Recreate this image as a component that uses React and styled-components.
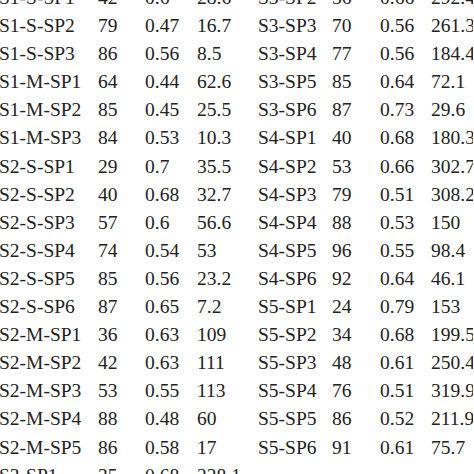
import styled, { createGlobalStyle } from 'styled-components';

const GlobalStyle = createGlobalStyle`
  html, body {
    margin: 0;
    padding: 0;
    background: #ffffff;
    overflow: hidden;
  }
`

const leftRows = [
  ['S1-S-SP1', '42', '0.6', '28.6'],
  ['S1-S-SP2', '79', '0.47', '16.7'],
  ['S1-S-SP3', '86', '0.56', '8.5'],
  ['S1-M-SP1', '64', '0.44', '62.6'],
  ['S1-M-SP2', '85', '0.45', '25.5'],
  ['S1-M-SP3', '84', '0.53', '10.3'],
  ['S2-S-SP1', '29', '0.7', '35.5'],
  ['S2-S-SP2', '40', '0.68', '32.7'],
  ['S2-S-SP3', '57', '0.6', '56.6'],
  ['S2-S-SP4', '74', '0.54', '53'],
  ['S2-S-SP5', '85', '0.56', '23.2'],
  ['S2-S-SP6', '87', '0.65', '7.2'],
  ['S2-M-SP1', '36', '0.63', '109'],
  ['S2-M-SP2', '42', '0.63', '111'],
  ['S2-M-SP3', '53', '0.55', '113'],
  ['S2-M-SP4', '88', '0.48', '60'],
  ['S2-M-SP5', '86', '0.58', '17'],
  ['S3-SP1', '35', '0.68', '228.1'],
]

const rightRows = [
  ['S3-SP2', '56', '0.66', '292.4'],
  ['S3-SP3', '70', '0.56', '261.3'],
  ['S3-SP4', '77', '0.56', '184.4'],
  ['S3-SP5', '85', '0.64', '72.1'],
  ['S3-SP6', '87', '0.73', '29.6'],
  ['S4-SP1', '40', '0.68', '180.3'],
  ['S4-SP2', '53', '0.66', '302.7'],
  ['S4-SP3', '79', '0.51', '308.2'],
  ['S4-SP4', '88', '0.53', '150'],
  ['S4-SP5', '96', '0.55', '98.4'],
  ['S4-SP6', '92', '0.64', '46.1'],
  ['S5-SP1', '24', '0.79', '153'],
  ['S5-SP2', '34', '0.68', '199.5'],
  ['S5-SP3', '48', '0.61', '250.4'],
  ['S5-SP4', '76', '0.51', '319.9'],
  ['S5-SP5', '86', '0.52', '211.9'],
  ['S5-SP6', '91', '0.61', '75.7'],
]

const App = () => {
  return (
    <>
      <GlobalStyle />
      <Page>
        <Block $cols='99px 47px 52px 61px'>
          {leftRows.map((row, i) => (
            <Row key={i}>
              {row.map((cell, j) => <Cell key={j}>{cell}</Cell>)}
            </Row>
          ))}
        </Block>
        <Block $cols='74px 48px 51px 60px'>
          {rightRows.map((row, i) => (
            <Row key={i}>
              {row.map((cell, j) => <Cell key={j}>{cell}</Cell>)}
            </Row>
          ))}
        </Block>
      </Page>
    </>
  )
}

export default App

const Page = styled.div`
  width: 474px;
  height: 474px;
  overflow: hidden;
  display: flex;
  align-items: flex-start;
  padding: 0 0 0 0;
  margin-left: -1px;
  font-family: "Liberation Serif", "Times New Roman", serif;
  font-size: 19.5px;
  color: #222222;
`

const Block = styled.div`
  display: grid;
  grid-template-columns: ${p => p.$cols};
  margin-top: -16px;
`

const Row = styled.div`
  display: contents;
`

const Cell = styled.div`
  height: 28.1px;
  line-height: 28.1px;
  white-space: nowrap;
`
